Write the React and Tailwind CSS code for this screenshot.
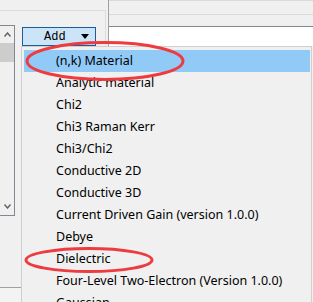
import { useState } from "react";

const materials = [
  "(n,k) Material",
  "Analytic material",
  "Chi2",
  "Chi3 Raman Kerr",
  "Chi3/Chi2",
  "Conductive 2D",
  "Conductive 3D",
  "Current Driven Gain (version 1.0.0)",
  "Debye",
  "Dielectric",
  "Four-Level Two-Electron (Version 1.0.0)",
  "Gaussian",
];

const App = () => {
  const [active] = useState(0);

  return (
    <div
      className="relative w-[313px] h-[302px] overflow-hidden bg-[#f0f0f0] flex text-[12.5px] text-black"
      style={{ fontFamily: '"Noto Sans", "Liberation Sans", sans-serif' }}
    >
      {/* left pane */}
      <div className="w-[108px] shrink-0 flex flex-col">
        <div className="mt-[10px] w-[106px] h-[215px] border-t border-r border-[#dcdcdc] pt-[14px] flex items-start gap-[7px]">
          {/* list box with scrollbar */}
          <div className="w-[15px] h-[191px] border border-l-0 border-[#828790] flex flex-col items-center">
            <div className="h-[17px] w-full flex items-center justify-center">
              <svg width="7" height="5" viewBox="0 0 7 5">
                <path d="M0.5 4.5 L3.5 1 L6.5 4.5" fill="none" stroke="#606060" strokeWidth="1.4" />
              </svg>
            </div>
            <div className="w-full h-[19px] bg-[#cdcdcd]" />
            <div className="flex-1" />
            <div className="h-[17px] w-full flex items-center justify-center">
              <svg width="7" height="5" viewBox="0 0 7 5">
                <path d="M0.5 0.5 L3.5 4 L6.5 0.5" fill="none" stroke="#606060" strokeWidth="1.4" />
              </svg>
            </div>
          </div>
          <button
            className="mt-[2px] w-[74px] h-[19px] border border-[#1a5d9c] bg-[#cce4f7] flex items-center pl-[21px] pr-[6px] text-[12px]"
            style={{ fontFamily: '"Liberation Mono", "DejaVu Sans Mono", monospace' }}
          >
            <span className="flex-1 text-left">Add</span>
            <svg width="8" height="5" viewBox="0 0 8 5">
              <path d="M0 0 H8 L4 5 Z" fill="#000" />
            </svg>
          </button>
        </div>
        <div className="h-[63px] border-b border-[#a0a0a0]" />
        <div className="flex-1 bg-[#f3f3f3]" />
      </div>

      {/* splitter */}
      <div className="w-px bg-[#a0a0a0] shrink-0" />

      {/* right pane */}
      <div className="flex-1 flex flex-col">
        <div className="h-[14px] border-t border-[#dadada]" />
        <div className="h-[13px] border-t border-b border-[#d9d9d9] border-b-[#828790]" />
        <div className="h-[20px] bg-white" />
        <div className="flex-1" />
      </div>

      {/* dropdown menu */}
      <div className="absolute left-[21px] top-[46px] right-[1px] h-[270px] bg-[#f0f0f0] border border-[#cfcfcf] pt-[3px] pl-[2px] pr-[1px]">
        {materials.map((name, i) => (
          <div
            key={name}
            className={`h-[22px] flex items-center pl-[32px] whitespace-nowrap ${
              i === active ? "bg-[#91c9f7]" : ""
            }`}
          >
            {name}
          </div>
        ))}
      </div>

      {/* red annotation ellipses */}
      <svg className="absolute inset-0 pointer-events-none" width="313" height="302">
        <ellipse cx="105" cy="61" rx="78" ry="18.5" fill="none" stroke="#ee3b3f" strokeWidth="3" />
        <ellipse cx="89" cy="260" rx="63" ry="11.5" fill="none" stroke="#ee3b3f" strokeWidth="3" />
      </svg>
    </div>
  );
};

export default App;
